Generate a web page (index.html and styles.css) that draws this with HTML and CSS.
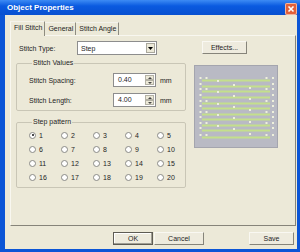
FILE: index.html
```html
<!DOCTYPE html>
<html lang="en">
<head>
  <meta charset="UTF-8">
  <title>Object Properties</title>
  <link rel="stylesheet" href="styles.css">
</head>
<body>
  <div class="window">
    <div class="titlebar">
      <span class="title">Object Properties</span>
      <span class="close">
        <svg width="12" height="12" viewBox="0 0 12 12">
          <path d="M3.5 3.5 L8.5 8.5 M8.5 3.5 L3.5 8.5" stroke="#fff" stroke-width="1.6"/>
        </svg>
      </span>
    </div>

    <div class="client">
      <div class="tabs">
        <div class="tab active">Fill Stitch</div>
        <div class="tab">General</div>
        <div class="tab">Stitch Angle</div>
      </div>

      <div class="panel">
        <div class="type-row">
          <span class="type-label">Stitch Type:</span>
          <div class="select">
            <span class="select-text">Step</span>
            <span class="select-btn">
              <svg width="5" height="3" viewBox="0 0 5 3"><path d="M0 0 H5 L2.5 3 Z" fill="#000"/></svg>
            </span>
          </div>
          <button class="btn effects">Effects...</button>
        </div>

        <div class="main">
          <div class="left-col">
            <fieldset class="group values">
              <legend>Stitch Values</legend>
              <div class="value-row">
                <span class="value-label">Stitch Spacing:</span>
                <div class="spin">
                  <span class="spin-text">0.40</span>
                  <span class="spin-btns"><i class="up"></i><i class="down"></i></span>
                </div>
                <span class="unit">mm</span>
              </div>
              <div class="value-row">
                <span class="value-label">Stitch Length:</span>
                <div class="spin">
                  <span class="spin-text">4.00</span>
                  <span class="spin-btns"><i class="up"></i><i class="down"></i></span>
                </div>
                <span class="unit">mm</span>
              </div>
            </fieldset>

            <fieldset class="group pattern">
              <legend>Step pattern</legend>
              <div class="radios" id="radios"></div>
            </fieldset>
          </div>

          <div class="preview">
            <svg width="84" height="83" viewBox="0 0 84 83" id="preview">
              <rect x="0.5" y="0.5" width="83" height="82" fill="#b9bac4" stroke="#a4a5ae"/>
            </svg>
          </div>
        </div>
      </div>

      <div class="buttons">
        <button class="btn default">OK</button>
        <button class="btn cancel">Cancel</button>
        <button class="btn save">Save</button>
      </div>
    </div>
  </div>

  <script>
    // step pattern radios 1..20
    const radios = document.getElementById('radios');
    for (let i = 1; i <= 20; i++) {
      const item = document.createElement('label');
      item.className = 'radio' + (i === 1 ? ' checked' : '');
      item.innerHTML = '<span class="dot"></span><span>' + i + '</span>';
      radios.appendChild(item);
    }

    // stitch preview: green rows with needle points
    const svg = document.getElementById('preview');
    const ns = 'http://www.w3.org/2000/svg';
    const rows = [13, 19, 24, 30, 36, 41, 47, 52, 58, 63, 70];
    const inner = [[24, 16], [24, 27], [24, 39], [24, 50], [24, 61],
                   [40, 20], [40, 31], [40, 42], [40, 53], [40, 64],
                   [56, 23], [56, 34], [56, 45], [56, 57], [56, 69]];

    function add(tag, attrs) {
      const el = document.createElementNS(ns, tag);
      for (const k in attrs) el.setAttribute(k, attrs[k]);
      svg.appendChild(el);
    }

    rows.forEach((y, i) => {
      add('line', { x1: 8, y1: y + 2.5, x2: 76, y2: y + 2.5, stroke: '#c4df8c', 'stroke-width': 2 });
    });
    rows.forEach((y, i) => {
      add('rect', { x: 5.5, y: y - 1, width: 2, height: 2, fill: '#eef0dc' });
      add('rect', { x: 78, y: y - 1, width: 2, height: 2, fill: '#eef0dc' });
      if (i % 2 === 0) {
        add('rect', { x: 11.5, y: y - 1, width: 2, height: 2, fill: '#eef0dc' });
        add('rect', { x: 71.5, y: y - 1, width: 2, height: 2, fill: '#eef0dc' });
      }
    });
    inner.forEach(([x, y]) => {
      add('rect', { x: x - 1, y: y - 1, width: 2, height: 2, fill: '#eef0dc' });
    });
  </script>
</body>
</html>
```

FILE: styles.css
```css
body {
  margin: 0;
  font-family: 'Liberation Sans', Arial, sans-serif;
  font-size: 7px;
  color: #1e1e1e;
  background: #ffffff;
}
.window {
  width: 300px;
  height: 252px;
  display: flex;
  flex-direction: column;
  background: #0b55d6;
}
.titlebar {
  height: 15px;
  display: flex;
  align-items: flex-start;
  padding: 0 3px 0 7px;
  background: linear-gradient(#3d8bf4, #0a5ae0 40%, #0850d0);
}
.title {
  flex: 1;
  margin-top: 3px;
  color: #ffffff;
  font-weight: bold;
  font-size: 8px;
  line-height: 9px;
}
.close {
  width: 12px;
  height: 12px;
  margin-top: 3px;
  border-radius: 2px;
  background: #e2603a;
  box-shadow: inset 0 0 0 1px #f3b59e;
  display: flex;
}
.client {
  flex: 1;
  margin: 0 3px 3px 5px;
  padding: 6px 1px 0 5px;
  background: #ece9d8;
  display: flex;
  flex-direction: column;
}
.tabs {
  display: flex;
  height: 14px;
  align-items: flex-end;
}
.tab {
  height: 13px;
  line-height: 12px;
  padding: 0 2px 0 3px;
  border-top: 1px solid #f4f3ec;
  border-right: 1px solid #8e8c80;
  box-sizing: border-box;
  white-space: nowrap;
}
.tab.active {
  height: 15px;
  margin-bottom: -1px;
  border-left: 1px solid #f8f7f0;
  background: #ece9d8;
  position: relative;
  z-index: 1;
}
.panel {
  height: 191px;
  box-sizing: border-box;
  border: 1px solid #f8f7f0;
  border-right-color: #86847a;
  border-bottom-color: #86847a;
  padding: 5px 0 0 5px;
}
.type-row {
  display: flex;
  align-items: center;
  height: 14px;
}
.type-label {
  width: 58px;
  margin-left: 3px;
}
.select {
  width: 80px;
  height: 14px;
  box-sizing: border-box;
  border: 1px solid #8d8d8d;
  background: #ffffff;
  display: flex;
  align-items: center;
}
.select-text {
  flex: 1;
  padding-left: 3px;
}
.select-btn {
  width: 9px;
  height: 10px;
  margin-right: 1px;
  display: flex;
  align-items: center;
  justify-content: center;
  background: #ece9d8;
  border: 1px solid #a9a79c;
  box-sizing: border-box;
}
.btn {
  font-family: 'Liberation Sans', Arial, sans-serif;
  font-size: 7px;
  color: #1e1e1e;
  padding: 0;
  box-sizing: border-box;
  background: #eeebde;
  border: 1px solid #f9f8f2;
  border-right-color: #86847a;
  border-bottom-color: #86847a;
}
.effects {
  width: 45px;
  height: 13px;
  margin-left: 45px;
  margin-top: -1px;
}
.main {
  display: flex;
  gap: 8px;
  margin-top: 4px;
}
.left-col {
  width: 170px;
  display: flex;
  flex-direction: column;
  gap: 7px;
}
.group {
  margin: 0;
  border: 1px solid #c9c6b6;
  border-radius: 2px;
  min-width: 0;
}
.group legend {
  padding: 0 1px;
  margin-left: 3px;
  line-height: 8px;
  height: 8px;
}
.values {
  padding: 6px 0 3px 12px;
}
.value-row {
  display: flex;
  align-items: center;
  height: 14px;
}
.value-row + .value-row {
  margin-top: 6px;
}
.value-label {
  width: 84px;
}
.spin {
  width: 43px;
  height: 14px;
  box-sizing: border-box;
  border: 1px solid #8d8d8d;
  background: #ffffff;
  display: flex;
}
.spin-text {
  flex: 1;
  padding-left: 4px;
  line-height: 12px;
}
.spin-btns {
  width: 9px;
  display: flex;
  flex-direction: column;
  margin: 1px;
}
.spin-btns i {
  flex: 1;
  background: #ece9d8;
  border: 1px solid #b4b2a6;
  box-sizing: border-box;
  position: relative;
}
.spin-btns i::after {
  content: '';
  position: absolute;
  left: 2px;
  top: 1px;
  border-left: 2px solid transparent;
  border-right: 2px solid transparent;
}
.spin-btns .up::after {
  border-bottom: 2px solid #444;
}
.spin-btns .down::after {
  border-top: 2px solid #444;
}
.unit {
  margin-left: 4px;
}
.pattern {
  padding: 2px 0 3px 12px;
}
.radios {
  display: grid;
  grid-template-columns: repeat(5, 32px);
  grid-auto-rows: 14px;
}
.radio {
  display: flex;
  align-items: center;
  gap: 3px;
}
.radio .dot {
  width: 7px;
  height: 7px;
  box-sizing: border-box;
  border-radius: 50%;
  border: 1px solid #8a8a86;
  background: #ffffff;
  position: relative;
}
.radio.checked .dot::after {
  content: '';
  position: absolute;
  left: 1.5px;
  top: 1.5px;
  width: 2px;
  height: 2px;
  border-radius: 50%;
  background: #111;
}
.preview {
  margin-top: 6px;
  width: 84px;
  height: 83px;
}
.preview svg {
  display: block;
}
.buttons {
  display: flex;
  margin-top: 6px;
  padding-left: 103px;
  padding-right: 2px;
  gap: 1px;
}
.buttons .btn {
  height: 13px;
}
.default {
  width: 40px;
  border: 1px solid #5e5c54;
  box-shadow: inset -1px -1px 0 #a09e94, inset 1px 1px 0 #ffffff;
}
.cancel {
  width: 50px;
}
.save {
  width: 45px;
  margin-left: auto;
}
```
